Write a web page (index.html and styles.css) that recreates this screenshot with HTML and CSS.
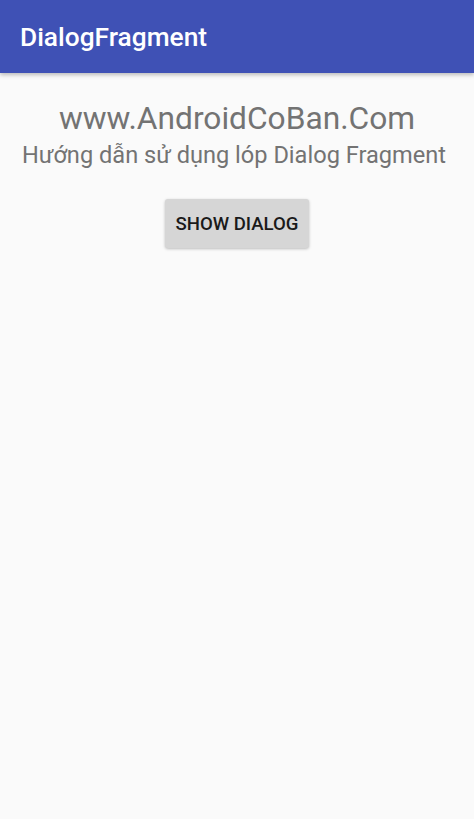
FILE: index.html
```html
<!DOCTYPE html>
<html lang="vi">
<head>
    <meta charset="UTF-8">
    <meta name="viewport" content="width=device-width, initial-scale=1.0">
    <title>DialogFragment</title>
    <link rel="stylesheet" href="styles.css">
</head>
<body>
    <div class="toolbar">
        <span class="title">DialogFragment</span>
    </div>

    <div class="content">
        <div class="site">www.AndroidCoBan.Com</div>
        <div class="subtitle">Hướng dẫn sử dụng lóp Dialog Fragment</div>
        <button class="btn" id="show-dialog">SHOW DIALOG</button>
    </div>
</body>
</html>
```

FILE: styles.css
```css
body {
    margin: 0;
    background-color: #fafafa;
    font-family: Roboto, "Noto Sans", sans-serif;
    height: 100vh;
}
.toolbar {
    height: 73px;
    background: #3f51b5;
    display: flex;
    align-items: center;
    padding-left: 20px;
    box-shadow: 0 2px 4px rgba(0, 0, 0, 0.25);
}
.toolbar .title {
    color: white;
    font-size: 26.3px;
    font-weight: 500;
}
.content {
    display: flex;
    flex-direction: column;
    align-items: center;
    padding-top: 26px;
}
.site {
    color: #737373;
    font-size: 31.7px;
    line-height: 40px;
}
.subtitle {
    color: #737373;
    font-size: 23.6px;
    line-height: 32px;
    margin-right: 6px;
}
.btn {
    margin-top: 28px;
    width: 144px;
    height: 49px;
    border: none;
    border-radius: 3px;
    background: #d6d6d6;
    color: #1a1a1a;
    font-family: Roboto, sans-serif;
    font-size: 18.6px;
    font-weight: 500;
    box-shadow: 0 1px 3px rgba(0, 0, 0, 0.25);
}
```
